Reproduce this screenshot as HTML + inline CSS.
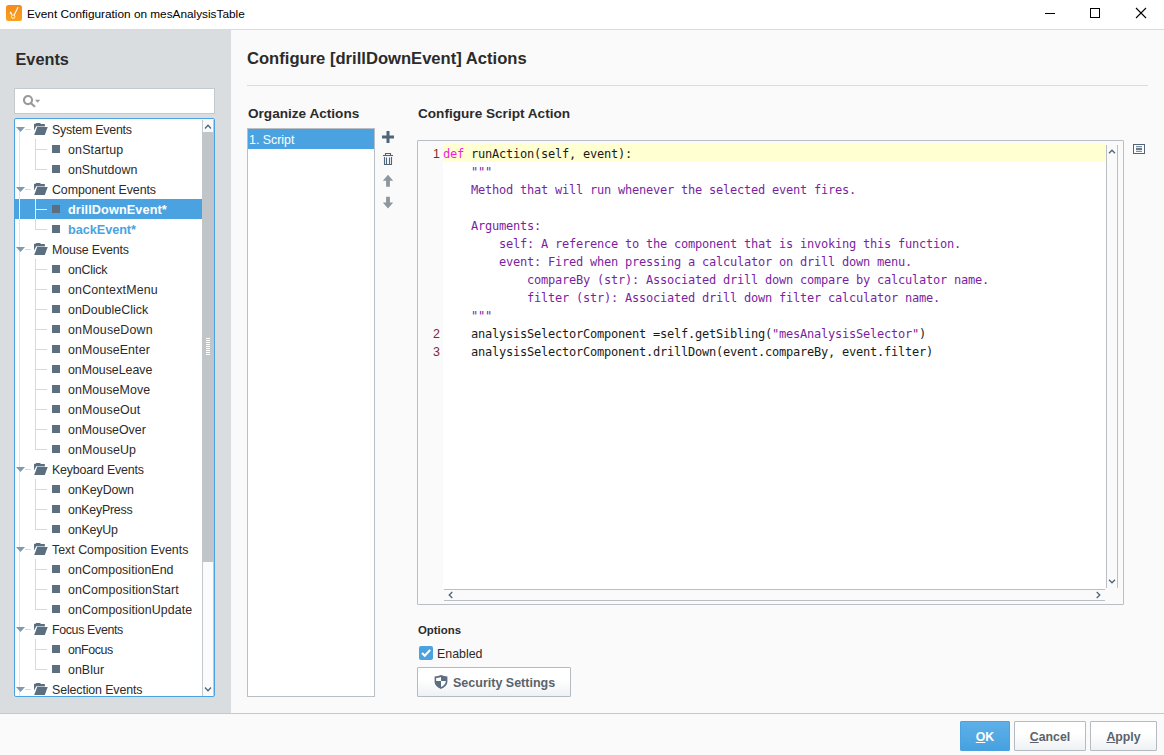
<!DOCTYPE html>
<html><head><meta charset="utf-8"><title>Event Configuration on mesAnalysisTable</title>
<style>
*{box-sizing:border-box;margin:0;padding:0}
html,body{width:1164px;height:755px;overflow:hidden;background:#fafafa}
body{position:relative;font-family:"Liberation Sans",sans-serif;font-size:12.4px;color:#2b2b2b}
.abs{position:absolute}
svg{position:absolute;overflow:visible}
#titlebar{left:0;top:0;width:1164px;height:30px;background:#fff;border-bottom:1px solid #d6dbdf}
#title{left:27px;top:6px;font-size:11.8px;color:#000;white-space:nowrap;line-height:16px}
#left{left:0;top:30px;width:231px;height:683px;background:#d9dde0}
#bottom{left:0;top:713px;width:1164px;height:42px;background:#fafafa;border-top:1px solid #c2c8cd}
.tx{position:absolute;white-space:nowrap;line-height:20px;height:20px}
.b{font-weight:bold}
#search{left:14px;top:88px;width:201px;height:26px;background:#fff;border:1px solid #c4c9cd}
#tree{left:14px;top:118px;width:201px;height:579px;background:#fff;border:1px solid #4aa3e0;border-radius:2px;overflow:hidden}
.r{position:relative;height:20px;width:187px;line-height:20px;white-space:nowrap}
.r .t{position:absolute;top:1px;font-size:12.4px;color:#2b2b2b}
.g .t{left:37px}
.c .t{left:53px}
.sel{background:#4aa3e0}
.sel .t{color:#fff;font-weight:bold;font-size:12.7px;letter-spacing:.15px}
.bk .t{color:#4aa3e0;font-weight:bold;font-size:12.7px;letter-spacing:.15px}
.tri{position:absolute;left:1px;top:8px;z-index:2}
.rv{position:absolute;left:4px;top:0;width:1px;height:20px;background:#e1e6ea}
.r:first-child .rv{top:12px;height:8px}
.sel .rv{background:#eaf3fb}
.fo{position:absolute;left:19px;top:4px}
.sq{position:absolute;left:37px;top:6px;width:8px;height:8px;background:#5b6f80}
.v{position:absolute;left:20px;top:0;width:1px;height:20px;background:#d3dae0}
.last .v{height:10px}
.h{position:absolute;left:20px;top:10px;width:12px;height:1px;background:#d3dae0}
.h1{position:absolute;left:10px;top:10px;width:6px;height:1px;background:#d3dae0}
.sel .v,.sel .h{background:#e8f2fa}
#tsb{left:202px;top:120px;width:12px;height:576px;background:#fbfbfb;border-left:1px solid #c4c9cd;border-right:1px solid #c4c9cd}
#tthumb{left:202px;top:132px;width:12px;height:430px;background:#c0c5c9}
#hr{left:247px;top:85px;width:901px;height:1px;background:#d8dde1}
#alist{left:247px;top:128px;width:128px;height:569px;background:#fff;border:1px solid #b9bfc4}
#asel{left:248px;top:129px;width:126px;height:20px;background:#4aa3e0}
#editor{left:417px;top:140px;width:707px;height:465px;background:#fafafa;border:1px solid #b9bfc4;border-radius:1px}
#code{left:443px;top:144px;width:663px;height:445px;background:#fff}
.ln{position:relative;height:18px;line-height:18px;white-space:pre;width:662px}
.ln.hl{background:#ffffd2}
.no{position:absolute;left:-24px;top:1px;width:21px;text-align:right;font-size:12.4px;color:#7d2a2a;font-family:"Liberation Sans",sans-serif}
.cd{position:relative;top:1px;font-family:"DejaVu Sans Mono","Liberation Mono",monospace;font-size:12px;letter-spacing:-0.225px;color:#1a1a1a}
.kw{color:#f61ae2}
.st{color:#7a1fa2}
#gut{left:418px;top:141px;width:25px;height:463px;background:#fafafa}
#vsb{left:1106px;top:145px;width:12px;height:443px;background:#fafafa;border-left:1px solid #b9bfc4;border-right:1px solid #b9bfc4}
#hsb{left:444px;top:589px;width:661px;height:12px;background:#fafafa;border-top:1px solid #b9bfc4;border-bottom:1px solid #b9bfc4}
.btn{position:absolute;height:30px;border:1px solid #b4babf;border-radius:1px;background:linear-gradient(#fff 40%,#eef1f3);font-weight:bold;font-size:12.3px;color:#5a636b;text-align:center;line-height:30px;white-space:nowrap}
.btn u{text-decoration-thickness:1px;text-underline-offset:1px}
#cb{left:419px;top:646px;width:14px;height:14px;background:#4aa3e0;border-radius:2px}
</style></head><body>
<div id="titlebar" class="abs"></div>
<svg style="left:6px;top:5px" width="16" height="16" viewBox="0 0 16 16"><defs><linearGradient id="og" x1="0" y1="0" x2="0" y2="1"><stop offset="0" stop-color="#f58a1f"/><stop offset="1" stop-color="#f9a11d"/></linearGradient></defs><rect width="16" height="16" rx="2.5" fill="url(#og)"/><path d="M11.9 2.4 L8.2 10" stroke="#fff" stroke-width="1.1" fill="none" stroke-linecap="round"/><path d="M4.5 7.4 L5.4 9.1" stroke="#fff" stroke-width="1.4" fill="none" stroke-linecap="round"/><circle cx="7.2" cy="11.6" r="1.7" stroke="#fff" stroke-width="0.9" fill="none"/></svg>
<div id="title" class="abs">Event Configuration on mesAnalysisTable</div>
<svg style="left:1040px;top:3px" width="112" height="22" viewBox="0 0 112 22"><path d="M5 10.5 H15" stroke="#000" stroke-width="1"/><rect x="50.5" y="5.5" width="9" height="9" fill="none" stroke="#000" stroke-width="1"/><path d="M96 5 L106 15 M106 5 L96 15" stroke="#000" stroke-width="1.1"/></svg>
<div id="left" class="abs"></div>
<div class="tx b" style="left:15.5px;top:49px;font-size:16.3px">Events</div>
<div id="search" class="abs"></div>
<svg style="left:22px;top:94px" width="20" height="14" viewBox="0 0 20 14"><circle cx="6" cy="6.1" r="4.05" fill="none" stroke="#9a9a9a" stroke-width="2.1"/><path d="M9 9.2 L12.4 12.2" stroke="#9a9a9a" stroke-width="2.2" stroke-linecap="round"/><path d="M13 5.7 H18.2 L15.6 8.8 Z" fill="#9a9a9a"/></svg>
<div id="tree" class="abs">
<div class="r g"><i class="rv"></i><svg class="tri" width="9" height="5" viewBox="0 0 9 5"><path d="M0 0H9L4.5 5Z" fill="#7f99b0"/></svg><i class="h1"></i><svg class="fo" width="14" height="12" viewBox="0 0 14 12"><path d="M0 7.4 V1.3 Q0 0.8 0.6 0.8 H1.6 L2.2 0 H6 L7 1 H10.4 Q10.9 1 10.9 1.5 V3 H3 Q2.4 3 2.2 3.5 Z" fill="#5b6f80"/><path d="M3.2 3 H10.9 V4 H2.9 Z" fill="#b4bfc9"/><path d="M3.15 3.9 H13.75 L10.8 11.9 H0.2 Z" fill="#5b6f80"/></svg><span class="t" style="letter-spacing:-0.216px">System Events</span></div>
<div class="r c"><i class="rv"></i><i class="v"></i><i class="h"></i><i class="sq"></i><span class="t" style="letter-spacing:0.175px">onStartup</span></div>
<div class="r c last"><i class="rv"></i><i class="v"></i><i class="h"></i><i class="sq"></i><span class="t" style="letter-spacing:0.044px">onShutdown</span></div>
<div class="r g"><i class="rv"></i><svg class="tri" width="9" height="5" viewBox="0 0 9 5"><path d="M0 0H9L4.5 5Z" fill="#7f99b0"/></svg><i class="h1"></i><svg class="fo" width="14" height="12" viewBox="0 0 14 12"><path d="M0 7.4 V1.3 Q0 0.8 0.6 0.8 H1.6 L2.2 0 H6 L7 1 H10.4 Q10.9 1 10.9 1.5 V3 H3 Q2.4 3 2.2 3.5 Z" fill="#5b6f80"/><path d="M3.2 3 H10.9 V4 H2.9 Z" fill="#b4bfc9"/><path d="M3.15 3.9 H13.75 L10.8 11.9 H0.2 Z" fill="#5b6f80"/></svg><span class="t" style="letter-spacing:-0.094px">Component Events</span></div>
<div class="r c sel"><i class="rv"></i><i class="v"></i><i class="h"></i><i class="sq"></i><span class="t" style="letter-spacing:0.107px">drillDownEvent*</span></div>
<div class="r c bk last"><i class="rv"></i><i class="v"></i><i class="h"></i><i class="sq"></i><span class="t" style="letter-spacing:-0.05px">backEvent*</span></div>
<div class="r g"><i class="rv"></i><svg class="tri" width="9" height="5" viewBox="0 0 9 5"><path d="M0 0H9L4.5 5Z" fill="#7f99b0"/></svg><i class="h1"></i><svg class="fo" width="14" height="12" viewBox="0 0 14 12"><path d="M0 7.4 V1.3 Q0 0.8 0.6 0.8 H1.6 L2.2 0 H6 L7 1 H10.4 Q10.9 1 10.9 1.5 V3 H3 Q2.4 3 2.2 3.5 Z" fill="#5b6f80"/><path d="M3.2 3 H10.9 V4 H2.9 Z" fill="#b4bfc9"/><path d="M3.15 3.9 H13.75 L10.8 11.9 H0.2 Z" fill="#5b6f80"/></svg><span class="t" style="letter-spacing:-0.146px">Mouse Events</span></div>
<div class="r c"><i class="rv"></i><i class="v"></i><i class="h"></i><i class="sq"></i><span class="t" style="letter-spacing:-0.2px">onClick</span></div>
<div class="r c"><i class="rv"></i><i class="v"></i><i class="h"></i><i class="sq"></i><span class="t" style="letter-spacing:0.183px">onContextMenu</span></div>
<div class="r c"><i class="rv"></i><i class="v"></i><i class="h"></i><i class="sq"></i><span class="t" style="letter-spacing:0.016px">onDoubleClick</span></div>
<div class="r c"><i class="rv"></i><i class="v"></i><i class="h"></i><i class="sq"></i><span class="t" style="letter-spacing:0.2px">onMouseDown</span></div>
<div class="r c"><i class="rv"></i><i class="v"></i><i class="h"></i><i class="sq"></i><span class="t" style="letter-spacing:0.11px">onMouseEnter</span></div>
<div class="r c"><i class="rv"></i><i class="v"></i><i class="h"></i><i class="sq"></i><span class="t" style="letter-spacing:-0.037px">onMouseLeave</span></div>
<div class="r c"><i class="rv"></i><i class="v"></i><i class="h"></i><i class="sq"></i><span class="t" style="letter-spacing:0.08px">onMouseMove</span></div>
<div class="r c"><i class="rv"></i><i class="v"></i><i class="h"></i><i class="sq"></i><span class="t" style="letter-spacing:0.133px">onMouseOut</span></div>
<div class="r c"><i class="rv"></i><i class="v"></i><i class="h"></i><i class="sq"></i><span class="t">onMouseOver</span></div>
<div class="r c last"><i class="rv"></i><i class="v"></i><i class="h"></i><i class="sq"></i><span class="t" style="letter-spacing:0.149px">onMouseUp</span></div>
<div class="r g"><i class="rv"></i><svg class="tri" width="9" height="5" viewBox="0 0 9 5"><path d="M0 0H9L4.5 5Z" fill="#7f99b0"/></svg><i class="h1"></i><svg class="fo" width="14" height="12" viewBox="0 0 14 12"><path d="M0 7.4 V1.3 Q0 0.8 0.6 0.8 H1.6 L2.2 0 H6 L7 1 H10.4 Q10.9 1 10.9 1.5 V3 H3 Q2.4 3 2.2 3.5 Z" fill="#5b6f80"/><path d="M3.2 3 H10.9 V4 H2.9 Z" fill="#b4bfc9"/><path d="M3.15 3.9 H13.75 L10.8 11.9 H0.2 Z" fill="#5b6f80"/></svg><span class="t" style="letter-spacing:-0.171px">Keyboard Events</span></div>
<div class="r c"><i class="rv"></i><i class="v"></i><i class="h"></i><i class="sq"></i><span class="t" style="letter-spacing:-0.101px">onKeyDown</span></div>
<div class="r c"><i class="rv"></i><i class="v"></i><i class="h"></i><i class="sq"></i><span class="t" style="letter-spacing:-0.245px">onKeyPress</span></div>
<div class="r c last"><i class="rv"></i><i class="v"></i><i class="h"></i><i class="sq"></i><span class="t" style="letter-spacing:-0.167px">onKeyUp</span></div>
<div class="r g"><i class="rv"></i><svg class="tri" width="9" height="5" viewBox="0 0 9 5"><path d="M0 0H9L4.5 5Z" fill="#7f99b0"/></svg><i class="h1"></i><svg class="fo" width="14" height="12" viewBox="0 0 14 12"><path d="M0 7.4 V1.3 Q0 0.8 0.6 0.8 H1.6 L2.2 0 H6 L7 1 H10.4 Q10.9 1 10.9 1.5 V3 H3 Q2.4 3 2.2 3.5 Z" fill="#5b6f80"/><path d="M3.2 3 H10.9 V4 H2.9 Z" fill="#b4bfc9"/><path d="M3.15 3.9 H13.75 L10.8 11.9 H0.2 Z" fill="#5b6f80"/></svg><span class="t">Text Composition Events</span></div>
<div class="r c"><i class="rv"></i><i class="v"></i><i class="h"></i><i class="sq"></i><span class="t" style="letter-spacing:0.053px">onCompositionEnd</span></div>
<div class="r c"><i class="rv"></i><i class="v"></i><i class="h"></i><i class="sq"></i><span class="t" style="letter-spacing:0.106px">onCompositionStart</span></div>
<div class="r c last"><i class="rv"></i><i class="v"></i><i class="h"></i><i class="sq"></i><span class="t" style="letter-spacing:0.089px">onCompositionUpdate</span></div>
<div class="r g"><i class="rv"></i><svg class="tri" width="9" height="5" viewBox="0 0 9 5"><path d="M0 0H9L4.5 5Z" fill="#7f99b0"/></svg><i class="h1"></i><svg class="fo" width="14" height="12" viewBox="0 0 14 12"><path d="M0 7.4 V1.3 Q0 0.8 0.6 0.8 H1.6 L2.2 0 H6 L7 1 H10.4 Q10.9 1 10.9 1.5 V3 H3 Q2.4 3 2.2 3.5 Z" fill="#5b6f80"/><path d="M3.2 3 H10.9 V4 H2.9 Z" fill="#b4bfc9"/><path d="M3.15 3.9 H13.75 L10.8 11.9 H0.2 Z" fill="#5b6f80"/></svg><span class="t" style="letter-spacing:-0.346px">Focus Events</span></div>
<div class="r c"><i class="rv"></i><i class="v"></i><i class="h"></i><i class="sq"></i><span class="t" style="letter-spacing:-0.4px">onFocus</span></div>
<div class="r c last"><i class="rv"></i><i class="v"></i><i class="h"></i><i class="sq"></i><span class="t" style="letter-spacing:0.04px">onBlur</span></div>
<div class="r g"><i class="rv"></i><svg class="tri" width="9" height="5" viewBox="0 0 9 5"><path d="M0 0H9L4.5 5Z" fill="#7f99b0"/></svg><i class="h1"></i><svg class="fo" width="14" height="12" viewBox="0 0 14 12"><path d="M0 7.4 V1.3 Q0 0.8 0.6 0.8 H1.6 L2.2 0 H6 L7 1 H10.4 Q10.9 1 10.9 1.5 V3 H3 Q2.4 3 2.2 3.5 Z" fill="#5b6f80"/><path d="M3.2 3 H10.9 V4 H2.9 Z" fill="#b4bfc9"/><path d="M3.15 3.9 H13.75 L10.8 11.9 H0.2 Z" fill="#5b6f80"/></svg><span class="t" style="letter-spacing:-0.12px">Selection Events</span></div>
</div>
<div id="tsb" class="abs"></div><div id="tthumb" class="abs"></div>
<svg style="left:203px;top:119px" width="10" height="577" viewBox="0 0 10 577"><path d="M2 9.5 L5 6.2 L8 9.5" fill="none" stroke="#4f6579" stroke-width="1.3"/><path d="M2 568.5 L5 571.8 L8 568.5" fill="none" stroke="#4f6579" stroke-width="1.3"/><path d="M3 219.5h4M3 221.5h4M3 223.5h4M3 225.5h4M3 227.5h4M3 229.5h4M3 231.5h4M3 233.5h4M3 235.5h4" stroke="#fff" stroke-width="1"/></svg>
<div class="tx b" style="left:247px;top:49px;font-size:16.6px">Configure [drillDownEvent] Actions</div>
<div id="hr" class="abs"></div>
<div class="tx b" style="left:248px;top:104px;font-size:13.6px">Organize Actions</div>
<div id="alist" class="abs"></div><div id="asel" class="abs"></div>
<div class="tx" style="left:249px;top:130px;color:#fff;font-size:12.4px">1. Script</div>
<svg style="left:382px;top:131px" width="12" height="78" viewBox="0 0 12 78"><path d="M6 0 V12 M0 6 H12" stroke="#4f6579" stroke-width="3"/><g fill="none" stroke="#4f6579" stroke-width="1.1"><path d="M1 24.5 H11"/><path d="M3.5 24 V22.5 H8.5 V24"/><path d="M2.5 26 V33.5 H9.5 V26"/><path d="M4.5 26.5 V33 M7.5 26.5 V33"/></g><path d="M6 43.8 L11.2 49.8 H7.9 V55.7 H4.1 V49.8 H0.8 Z" fill="#8e979e"/><path d="M6 77.6 L11.2 71.6 H7.9 V65.8 H4.1 V71.6 H0.8 Z" fill="#8e979e"/></svg>
<div class="tx b" style="left:418px;top:104px;font-size:13.6px">Configure Script Action</div>
<div id="editor" class="abs"></div>
<div id="code" class="abs">
<div class="ln hl"><span class="no">1</span><span class="cd"><span class="kw">def</span> runAction(self, event):</span></div>
<div class="ln "><span class="no"></span><span class="cd">    <span class="st">"""</span></span></div>
<div class="ln "><span class="no"></span><span class="cd">    <span class="st">Method that will run whenever the selected event fires.</span></span></div>
<div class="ln "><span class="no"></span><span class="cd"></span></div>
<div class="ln "><span class="no"></span><span class="cd">    <span class="st">Arguments:</span></span></div>
<div class="ln "><span class="no"></span><span class="cd">    <span class="st">    self: A reference to the component that is invoking this function.</span></span></div>
<div class="ln "><span class="no"></span><span class="cd">    <span class="st">    event: Fired when pressing a calculator on drill down menu.</span></span></div>
<div class="ln "><span class="no"></span><span class="cd">    <span class="st">        compareBy (str): Associated drill down compare by calculator name.</span></span></div>
<div class="ln "><span class="no"></span><span class="cd">    <span class="st">        filter (str): Associated drill down filter calculator name.</span></span></div>
<div class="ln "><span class="no"></span><span class="cd">    <span class="st">"""</span></span></div>
<div class="ln "><span class="no">2</span><span class="cd">    analysisSelectorComponent =self.getSibling(<span class="st">"mesAnalysisSelector"</span>)</span></div>
<div class="ln "><span class="no">3</span><span class="cd">    analysisSelectorComponent.drillDown(event.compareBy, event.filter)</span></div>
</div>
<div id="vsb" class="abs"></div><div id="hsb" class="abs"></div>
<svg style="left:1106px;top:145px" width="12" height="443" viewBox="0 0 12 443"><path d="M3 8.3 L6 5.2 L9 8.3" fill="none" stroke="#4f6579" stroke-width="1.3"/><path d="M3 434.7 L6 437.8 L9 434.7" fill="none" stroke="#4f6579" stroke-width="1.3"/></svg>
<svg style="left:444px;top:589px" width="661" height="12" viewBox="0 0 661 12"><path d="M8.3 3 L5.2 6 L8.3 9" fill="none" stroke="#4f6579" stroke-width="1.3"/><path d="M652.7 3 L655.8 6 L652.7 9" fill="none" stroke="#4f6579" stroke-width="1.3"/></svg>
<svg style="left:1133px;top:144px" width="12" height="10" viewBox="0 0 12 10"><rect x="0.5" y="0.5" width="11" height="9" fill="#fff" stroke="#4f6579" stroke-width="1"/><path d="M3 2.7 H9 M3 7.3 H9" stroke="#4f6579" stroke-width="0.9"/><path d="M3 5 H9" stroke="#4f6579" stroke-width="1.7"/></svg>
<div class="tx b" style="left:418px;top:620px;font-size:11.4px">Options</div>
<div id="cb" class="abs"></div>
<svg style="left:419px;top:646px" width="14" height="14" viewBox="0 0 14 14"><path d="M3 7 L5.8 9.8 L11.2 3.9" fill="none" stroke="#fff" stroke-width="2.1"/></svg>
<div class="tx" style="left:437px;top:644px;font-size:12.4px">Enabled</div>
<div class="btn" style="left:417px;top:667px;width:154px"></div>
<svg style="left:434px;top:675px" width="14" height="14" viewBox="0 0 14 14"><path d="M7 0.1 C5 0.9 3 1.3 0.6 1.4 V6.5 C0.6 10 3.4 12.5 7 13.9 C10.6 12.5 13.4 10 13.4 6.5 V1.4 C11 1.3 9 0.9 7 0.1 Z" fill="#5b6f80"/><path d="M7 2 V6.1 H2.2 V3 C4 2.9 5.6 2.6 7 2 Z M7 6.1 H11.8 C11.8 8.8 9.8 10.8 7 12.1 Z" fill="#fff"/></svg>
<div class="tx b" style="left:453px;top:673px;font-size:12.5px;color:#5a636b">Security Settings</div>
<div id="bottom" class="abs"></div>
<div class="btn" style="left:960px;top:721px;width:50px;background:linear-gradient(#5db0e8,#47a1df);border-color:#4aa3e0;color:#fff"><u>O</u>K</div>
<div class="btn" style="left:1014px;top:721px;width:72px"><u>C</u>ancel</div>
<div class="btn" style="left:1090px;top:721px;width:67px"><u>A</u>pply</div>
</body></html>
